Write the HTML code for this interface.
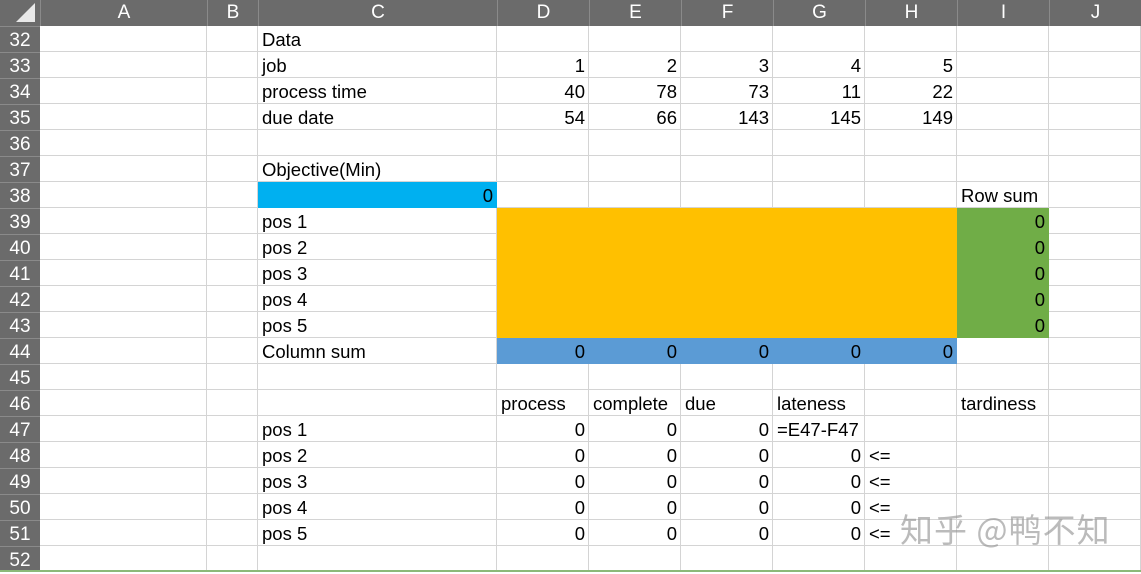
<!DOCTYPE html><html><head><meta charset="utf-8"><style>
body{margin:0;width:1141px;height:572px;overflow:hidden;background:#fff;font-family:"Liberation Sans","Noto Sans CJK SC",sans-serif;position:relative}
.h{position:absolute;background:#6b6b6b;color:#fff;font-size:19px;text-align:center;box-sizing:border-box}
.c{position:absolute;height:26px;line-height:28px;font-size:18.5px;color:#000;box-sizing:border-box;padding:0 4px;white-space:nowrap}
.r{text-align:right}
.vl{position:absolute;top:26px;width:1px;height:546px;background:#d4d4d4}
.hl{position:absolute;left:40px;width:1101px;height:1px;background:#d4d4d4}
.f{position:absolute}
</style></head><body>
<div class="f" style="left:0;top:0;width:1141px;height:26px;background:#6b6b6b"></div>
<div class="f" style="left:0;top:26px;width:40px;height:546px;background:#6b6b6b"></div>
<div id="g"></div>
<svg class="f" style="left:14px;top:3px" width="22" height="20"><polygon points="21,0 21,19 2,19" fill="#e8e8e8"/></svg>
<script>
var cols=[[40,207,'A'],[207,258,'B'],[258,497,'C'],[497,589,'D'],[589,681,'E'],[681,773,'F'],[773,865,'G'],[865,957,'H'],[957,1049,'I'],[1049,1141,'J']];
var s='';
cols.forEach(function(c){s+='<div class="h" style="left:'+c[0]+'px;top:0;width:'+(c[1]-c[0])+'px;height:26px;line-height:26px;border-left:1px solid #8a8a8a">'+c[2]+'</div>';s+='<div class="vl" style="left:'+(c[1]-1)+'px"></div>';});
for(var i=0;i<21;i++){var t=26+i*26;s+='<div class="hl" style="top:'+(t+25)+'px"></div>';s+='<div class="h" style="left:0;top:'+t+'px;width:40px;height:26px;line-height:27px;border-top:1px solid #8a8a8a">'+(32+i)+'</div>';}
document.getElementById('g').innerHTML=s;
</script>
<div class="f" style="left:258px;top:182px;width:239px;height:26px;background:#00b0f0"></div>
<div class="f" style="left:497px;top:208px;width:460px;height:130px;background:#ffc000"></div>
<div class="f" style="left:957px;top:208px;width:92px;height:130px;background:#70ad47"></div>
<div class="f" style="left:497px;top:338px;width:460px;height:26px;background:#5b9bd5"></div>
<div class="f" style="left:0;top:570px;width:1141px;height:2px;background:#8bb978"></div>
<div id="t"></div>
<script>
function row(n){return 26+(n-32)*26;}
var L={C:258,D:497,E:589,F:681,G:773,H:865,I:957};
var d=[
[32,'C','Data'],[33,'C','job'],[34,'C','process time'],[35,'C','due date'],[37,'C','Objective(Min)'],
[44,'C','Column sum'],[38,'I','Row sum'],
[46,'D','process'],[46,'E','complete'],[46,'F','due'],[46,'G','lateness'],[46,'I','tardiness'],
[47,'G','=E47-F47']];
for(var k=1;k<=5;k++){d.push([38+k,'C','pos '+k]);d.push([46+k,'C','pos '+k]);}
var s='';
d.forEach(function(x){s+='<div class="c" style="left:'+(L[x[1]])+'px;top:'+row(x[0])+'px">'+x[2]+'</div>';});
function R(r,col,v){s+='<div class="c r" style="left:'+L[col]+'px;width:92px;top:'+row(r)+'px">'+v+'</div>';}
var cs='DEFGH'.split('');
[[33,[1,2,3,4,5]],[34,[40,78,73,11,22]],[35,[54,66,143,145,149]]].forEach(function(x){x[1].forEach(function(v,i){R(x[0],cs[i],v);});});
s+='<div class="c r" style="left:258px;width:239px;top:'+row(38)+'px">0</div>';
for(var r=39;r<=43;r++)R(r,'I',0);
cs.forEach(function(c){R(44,c,0);});
for(r=47;r<=51;r++){R(r,'D',0);R(r,'E',0);R(r,'F',0);if(r>47){R(r,'G',0);s+='<div class="c" style="left:865px;top:'+row(r)+'px">&lt;=</div>';}}
document.getElementById('t').innerHTML=s;
</script>
<div class="f" style="left:900px;top:504px;font-size:33px;letter-spacing:1px;color:rgba(150,150,150,0.65);font-family:'Noto Sans CJK SC',sans-serif;white-space:nowrap">知乎 @鸭不知</div>
</body></html>
